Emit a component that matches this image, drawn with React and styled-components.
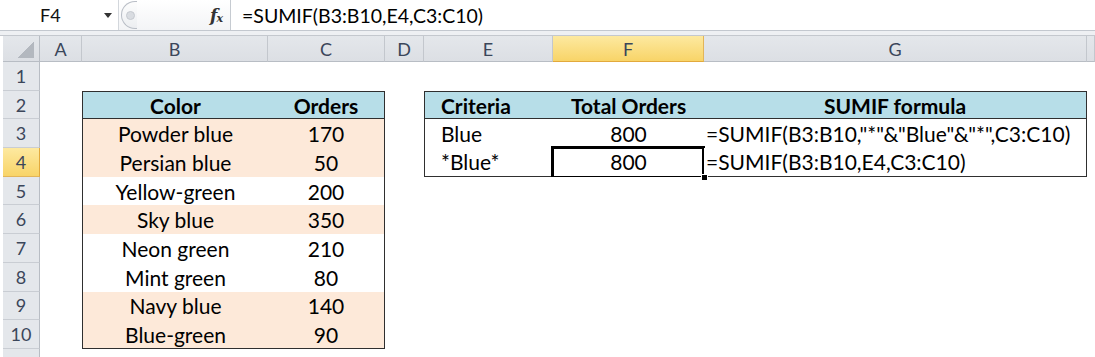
import React from 'react';
import styled, { createGlobalStyle, css } from 'styled-components';

const Global = createGlobalStyle`
  html, body { margin: 0; padding: 0; background: #fff; overflow: hidden; }
  body { font-family: Lato, "Liberation Sans", sans-serif; color: #000; }
  #root { width: 1095px; height: 357px; overflow: hidden; }
`;

const LINE = '#2f2f2f';
const BLUE = '#b7dee8';
const PEACH = '#fde9d9';

const Page = styled.div`
  width: 1095px;
  height: 357px;
  display: flex;
  flex-direction: column;
  background: #fff;
  overflow: hidden;
`;

const FormulaBar = styled.div`
  flex-shrink: 0;
  display: flex;
  height: 30px;
  padding-left: 3px;
  border-bottom: 1px solid #c3c8cf;
  background: #fff;
`;

const NameBox = styled.div`
  width: 115px;
  display: flex;
  align-items: center;
  box-sizing: border-box;
  padding-left: 37px;
  font-size: 18px;
  color: #111;
  position: relative;
`;

const DropArrow = styled.span`
  position: absolute;
  left: 101px;
  top: 13px;
  width: 0;
  height: 0;
  border-left: 4px solid transparent;
  border-right: 4px solid transparent;
  border-top: 5px solid #333;
`;

const Middle = styled.div`
  width: 112px;
  display: flex;
  align-items: center;
  background: linear-gradient(#ffffff, #f3f4f6);
  border-left: 1px solid #d3d7dc;
  box-sizing: border-box;
`;

const Grip = styled.div`
  width: 16px;
  height: 28px;
  margin-left: 2px;
  border: 1px solid #b9bec6;
  border-right: none;
  border-radius: 14px 0 0 14px;
  box-sizing: border-box;
  display: flex;
  align-items: center;
  justify-content: flex-end;
  background: linear-gradient(#fdfdfd, #eceef1);
`;

const GripDot = styled.span`
  width: 7px;
  height: 7px;
  border-radius: 50%;
  background: #d9dce1;
  border: 1px solid #c6cad0;
  margin-right: 2px;
`;

const Fx = styled.div`
  margin-left: auto;
  margin-right: 8px;
  font-family: "DejaVu Serif", "Liberation Serif", serif;
  font-style: italic;
  font-weight: 700;
  font-size: 17px;
  color: #333;
  letter-spacing: -1px;
  sub {
    font-size: 11px;
    vertical-align: -1px;
  }
`;

const FormulaInput = styled.div`
  flex: 1;
  display: flex;
  align-items: center;
  padding-left: 11px;
  border-left: 1px solid #c6cbd1;
  font-size: 19.5px;
  color: #000;
`;

const Band = styled.div`
  flex-shrink: 0;
  height: 4px;
  background: #eef0f3;
  border-bottom: 1px solid #c4c8ce;
`;

const Sheet = styled.div`
  flex-shrink: 0;
  display: grid;
  padding-left: 3px;
  grid-template-columns: 37px 42px 186px 117px 39px 129px 151px 383px 1fr;
  grid-template-rows: 26px repeat(11, 28.7px);
  font-size: 21px;
`;

const ColHead = styled.div`
  box-sizing: border-box;
  display: flex;
  align-items: center;
  justify-content: center;
  font-size: 18px;
  color: #3b465a;
  background: ${p => (p.$active ? 'linear-gradient(#fde9a0, #f8d468)' : 'linear-gradient(#e4e7eb, #dcdfe4)')};
  border-right: 1px solid ${p => (p.$active ? '#e2b559' : '#c3c7cd')};
  border-bottom: 1px solid ${p => (p.$active ? '#e2a93c' : '#b8bdc4')};
`;

const Corner = styled(ColHead)`
  justify-content: flex-end;
  align-items: flex-end;
  padding: 0 5px 3px 0;
  border-right: 1px solid #b8bdc4;
`;

const CornerTriangle = styled.span`
  width: 17px;
  height: 16px;
  background: linear-gradient(135deg, transparent 50%, #b3b8bf 50%);
`;

const RowHead = styled.div`
  box-sizing: border-box;
  display: flex;
  align-items: center;
  justify-content: center;
  font-size: 18px;
  color: #3b465a;
  background: ${p => (p.$active ? 'linear-gradient(#fde9a0, #f8d468)' : '#e4e7eb')};
  border-right: 1px solid ${p => (p.$active ? '#e2a93c' : '#b8bdc4')};
  border-bottom: 1px solid ${p => (p.$active ? '#e2b559' : '#c9cdd3')};
`;

const border = (on) => (on ? `1px solid ${LINE}` : 'none');

const Cell = styled.div`
  box-sizing: border-box;
  display: flex;
  align-items: center;
  justify-content: ${p => (p.$align === 'left' ? 'flex-start' : 'center')};
  padding-left: ${p => p.$pad || 0}px;
  background: ${p => p.$bg || '#fff'};
  font-weight: ${p => (p.$bold ? 700 : 400)};
  border-top: ${p => border(p.$bt)};
  border-bottom: ${p => border(p.$bb)};
  border-left: ${p => border(p.$bl)};
  border-right: ${p => border(p.$br)};
  white-space: nowrap;
  position: relative;
  ${p =>
    p.$selected &&
    css`
      &::after {
        content: '';
        position: absolute;
        left: -2px;
        top: -2px;
        right: -1px;
        bottom: -2px;
        border: 3px solid #000;
        border-bottom-width: 2px;
        pointer-events: none;
      }
      &::before {
        content: '';
        position: absolute;
        right: -4px;
        bottom: -5px;
        width: 5px;
        height: 5px;
        background: #000;
        border: 1px solid #fff;
        z-index: 2;
      }
    `}
`;

const columns = ['A', 'B', 'C', 'D', 'E', 'F', 'G', ''];

const colorRows = [
  ['Powder blue', '170', PEACH],
  ['Persian blue', '50', PEACH],
  ['Yellow-green', '200', '#fff'],
  ['Sky blue', '350', PEACH],
  ['Neon green', '210', '#fff'],
  ['Mint green', '80', '#fff'],
  ['Navy blue', '140', PEACH],
  ['Blue-green', '90', PEACH],
];

const criteriaRows = [
  ['Blue', '800', '=SUMIF(B3:B10,"*"&"Blue"&"*",C3:C10)'],
  ['*Blue*', '800', '=SUMIF(B3:B10,E4,C3:C10)'],
];

function renderRow(r) {
  const cells = [];
  const key = (c) => `${r}-${c}`;
  cells.push(
    <RowHead key={key('h')} $active={r === 4}>
      {r <= 10 ? r : ''}
    </RowHead>
  );
  cells.push(<Cell key={key('A')} />);
  if (r === 2) {
    cells.push(
      <Cell key={key('B')} $bg={BLUE} $bold $bt $bb $bl>
        Color
      </Cell>,
      <Cell key={key('C')} $bg={BLUE} $bold $bt $bb $br>
        Orders
      </Cell>
    );
  } else if (r >= 3 && r <= 10) {
    const [name, val, bg] = colorRows[r - 3];
    const last = r === 10;
    cells.push(
      <Cell key={key('B')} $bg={bg} $bl $bb={last}>
        {name}
      </Cell>,
      <Cell key={key('C')} $bg={bg} $br $bb={last}>
        {val}
      </Cell>
    );
  } else {
    cells.push(<Cell key={key('B')} />, <Cell key={key('C')} />);
  }
  cells.push(<Cell key={key('D')} />);
  if (r === 2) {
    cells.push(
      <Cell key={key('E')} $bg={BLUE} $bold $bt $bb $bl $align="left" $pad={16}>
        Criteria
      </Cell>,
      <Cell key={key('F')} $bg={BLUE} $bold $bt $bb>
        Total Orders
      </Cell>,
      <Cell key={key('G')} $bg={BLUE} $bold $bt $bb $br>
        SUMIF formula
      </Cell>
    );
  } else if (r === 3 || r === 4) {
    const [crit, total, formula] = criteriaRows[r - 3];
    const last = r === 4;
    cells.push(
      <Cell key={key('E')} $bl $bb={last} $align="left" $pad={16}>
        {crit}
      </Cell>,
      <Cell key={key('F')} $bb={last} $selected={r === 4}>
        {total}
      </Cell>,
      <Cell key={key('G')} $br $bb={last} $align="left" $pad={2}>
        {formula}
      </Cell>
    );
  } else {
    cells.push(<Cell key={key('E')} />, <Cell key={key('F')} />, <Cell key={key('G')} />);
  }
  cells.push(<Cell key={key('H')} />);
  return cells;
}

export default function App() {
  const rows = [];
  for (let r = 1; r <= 11; r++) rows.push(...renderRow(r));
  return (
    <>
      <Global />
      <Page>
        <FormulaBar>
          <NameBox>
            F4
            <DropArrow />
          </NameBox>
          <Middle>
            <Grip>
              <GripDot />
            </Grip>
            <Fx>
              f<sub>x</sub>
            </Fx>
          </Middle>
          <FormulaInput>=SUMIF(B3:B10,E4,C3:C10)</FormulaInput>
        </FormulaBar>
        <Band />
        <Sheet>
          <Corner>
            <CornerTriangle />
          </Corner>
          {columns.map((c, i) => (
            <ColHead key={i} $active={c === 'F'}>
              {c}
            </ColHead>
          ))}
          {rows}
        </Sheet>
      </Page>
    </>
  );
}
